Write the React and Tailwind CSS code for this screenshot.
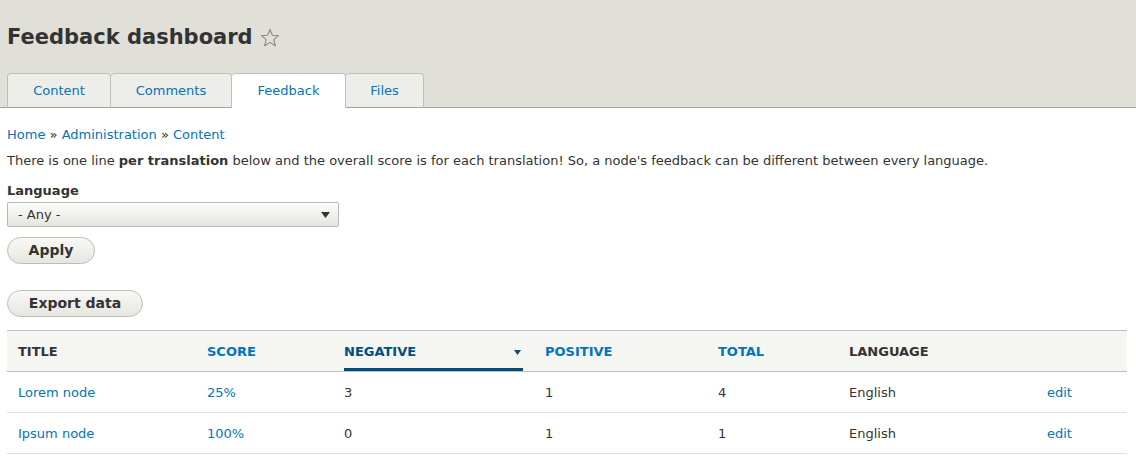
import React from "react";

const tabs = [
  { label: "Content", w: "w-[104px]", first: true },
  { label: "Comments", w: "w-[121px]" },
  { label: "Feedback", w: "w-[114px]", active: true },
  { label: "Files", w: "w-[78px]" },
];

const rows = [
  { title: "Lorem node", score: "25%", neg: "3", pos: "1", total: "4", lang: "English" },
  { title: "Ipsum node", score: "100%", neg: "0", pos: "1", total: "1", lang: "English" },
];

function Star() {
  return (
    <svg width="20" height="20" viewBox="0 0 20 20" className="ml-[7px] mt-[1px]">
      <path
        d="M10 1.5 L12.4 7.2 L18.5 7.6 L13.8 11.6 L15.3 17.7 L10 14.4 L4.7 17.7 L6.2 11.6 L1.5 7.6 L7.6 7.2 Z"
        fill="none"
        stroke="#8a8a82"
        strokeWidth="1.1"
        strokeLinejoin="round"
      />
    </svg>
  );
}

export default function App() {
  return (
    <div className="min-h-screen bg-white text-[13px] text-[#333]" style={{ fontFamily: '"DejaVu Sans", sans-serif' }}>
      <header className="bg-[#e0e0d8] border-b border-[#a6a6a0] pl-[7px]">
        <div className="pt-[22px] flex items-center h-[52px]">
          <h1 className="text-[21px] leading-[30px] font-bold text-[#333]">Feedback dashboard</h1>
          <Star />
        </div>
        <ul className="flex mt-[21px] -mb-px">
          {tabs.map((t) => (
            <li
              key={t.label}
              className={`${t.w} h-[35px] flex items-center justify-center rounded-t-[4px] border-t border-r border-[#bfbfba] ${
                t.first ? "border-l" : ""
              } ${t.active ? "bg-white border-b border-b-white" : "bg-[#ededea] border-b border-b-[#a6a6a0]"}`}
            >
              <a className="text-[#0074bd] text-[13px] pt-[1px]">{t.label}</a>
            </li>
          ))}
        </ul>
      </header>

      <main className="pl-[7px] pr-[9px]">
        <nav className="mt-[17px] leading-[20px] text-[#0074bd]">
          Home <span className="text-[#333]">»</span> Administration <span className="text-[#333]">»</span> Content
        </nav>
        <p className="mt-[6px] leading-[20px]">
          There is one line <strong>per translation</strong> below and the overall score is for each translation! So, a
          node's feedback can be different between every language.
        </p>

        <label className="block mt-[10px] leading-[20px] font-bold">Language</label>
        <div className="mt-[1px] w-[332px] h-[25px] rounded-[2px] border border-[#b8b8b0] bg-gradient-to-b from-[#fcfcfa] to-[#e6e6e0] flex items-center justify-between pl-[10px] pr-[8px]">
          <span className="text-[13px]">- Any -</span>
          <svg width="9" height="6" viewBox="0 0 9 6">
            <path d="M0 0 H9 L4.5 6 Z" fill="#333" />
          </svg>
        </div>

        <button className="mt-[10px] block h-[27px] w-[88px] rounded-full border border-[#bdbdb5] bg-gradient-to-b from-[#f8f8f6] to-[#e6e6e1] font-bold text-[14px] text-[#333]">
          Apply
        </button>

        <button className="mt-[26px] block h-[27px] w-[136px] rounded-full border border-[#bdbdb5] bg-gradient-to-b from-[#f8f8f6] to-[#e6e6e1] font-bold text-[14px] text-[#333]">
          Export data
        </button>

        <table className="mt-[13px] w-full border-collapse">
          <thead>
            <tr className="bg-[#f5f5f2] border-t border-b border-[#bfbfba] h-[41px] text-left text-[13px] font-bold uppercase">
              <th className="w-[189px] pl-[11px] pt-[2px] text-[#333]">Title</th>
              <th className="w-[137px] pl-[11px] pt-[2px] text-[#0074bd]">Score</th>
              <th className="w-[201px] px-[11px] pb-0 text-[#004f80] align-bottom">
                <div className="h-[40px] flex items-center justify-between border-b-[3px] border-[#004f80] pt-[5px]">
                  <span>Negative</span>
                  <svg width="7" height="5" viewBox="0 0 7 5" className="mr-[2px]">
                    <path d="M0 0 H7 L3.5 5 Z" fill="#004f80" />
                  </svg>
                </div>
              </th>
              <th className="w-[173px] pl-[11px] pt-[2px] text-[#0074bd]">Positive</th>
              <th className="w-[131px] pl-[11px] pt-[2px] text-[#0074bd]">Total</th>
              <th className="w-[198px] pl-[11px] pt-[2px] text-[#333]">Language</th>
              <th className="pl-[11px]"></th>
            </tr>
          </thead>
          <tbody>
            {rows.map((r) => (
              <tr key={r.title} className="border-b border-[#e2e2dc] h-[41px]">
                <td className="pl-[11px] pt-[2px] text-[#0074bd]">{r.title}</td>
                <td className="pl-[11px] pt-[2px] text-[#0074bd]">{r.score}</td>
                <td className="pl-[11px] pt-[2px]">{r.neg}</td>
                <td className="pl-[11px] pt-[2px]">{r.pos}</td>
                <td className="pl-[11px] pt-[2px]">{r.total}</td>
                <td className="pl-[11px] pt-[2px]">{r.lang}</td>
                <td className="pl-[11px] pt-[2px] text-[#0074bd]">edit</td>
              </tr>
            ))}
          </tbody>
        </table>
      </main>
    </div>
  );
}
